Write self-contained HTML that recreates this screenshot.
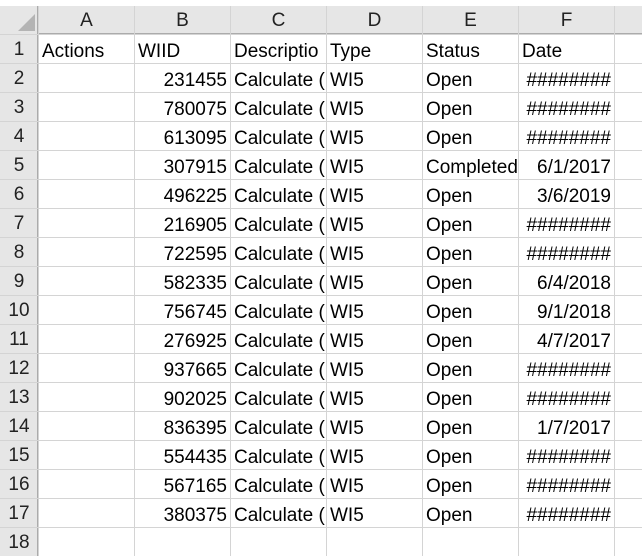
<!DOCTYPE html>
<html><head><style>
body{margin:0;width:642px;height:548px;overflow:hidden;background:#fff;font-family:"Liberation Sans",sans-serif;}
.g{position:absolute;left:0;top:6px;display:grid;grid-template-columns:38px repeat(6,95px) 40px;grid-auto-rows:28px;gap:1px;background:#d4d4d4;}
.g div{background:#fff;font-size:19px;line-height:33px;white-space:nowrap;overflow:hidden;padding:0 3px;color:#000;}
.g .h{background:#e6e6e6;text-align:center;color:#222;line-height:30px;padding:0;}
.g .hb{box-shadow:inset 0 -1px 0 #ababab;}
.g .rb{box-shadow:inset -1px 0 0 #ababab;}
.g .n{text-align:right;}
.g .c{padding-right:0;}
</style></head><body>
<div class="g">
<div class="h hb rb" style="position:relative"><span style="position:absolute;right:3px;bottom:3px;width:0;height:0;border-left:17px solid transparent;border-bottom:17px solid #b4b4b4"></span></div><div class="h hb">A</div><div class="h hb">B</div><div class="h hb">C</div><div class="h hb">D</div><div class="h hb">E</div><div class="h hb">F</div><div class="h hb"></div>
<div class="h rb">1</div><div>Actions</div><div>WIID</div><div class="c">Descriptio</div><div>Type</div><div>Status</div><div>Date</div><div></div>
<div class="h rb">2</div><div></div><div class="n">231455</div><div class="c">Calculate (</div><div>WI5</div><div>Open</div><div class="n">########</div><div></div>
<div class="h rb">3</div><div></div><div class="n">780075</div><div class="c">Calculate (</div><div>WI5</div><div>Open</div><div class="n">########</div><div></div>
<div class="h rb">4</div><div></div><div class="n">613095</div><div class="c">Calculate (</div><div>WI5</div><div>Open</div><div class="n">########</div><div></div>
<div class="h rb">5</div><div></div><div class="n">307915</div><div class="c">Calculate (</div><div>WI5</div><div class="c">Completed</div><div class="n">6/1/2017</div><div></div>
<div class="h rb">6</div><div></div><div class="n">496225</div><div class="c">Calculate (</div><div>WI5</div><div>Open</div><div class="n">3/6/2019</div><div></div>
<div class="h rb">7</div><div></div><div class="n">216905</div><div class="c">Calculate (</div><div>WI5</div><div>Open</div><div class="n">########</div><div></div>
<div class="h rb">8</div><div></div><div class="n">722595</div><div class="c">Calculate (</div><div>WI5</div><div>Open</div><div class="n">########</div><div></div>
<div class="h rb">9</div><div></div><div class="n">582335</div><div class="c">Calculate (</div><div>WI5</div><div>Open</div><div class="n">6/4/2018</div><div></div>
<div class="h rb">10</div><div></div><div class="n">756745</div><div class="c">Calculate (</div><div>WI5</div><div>Open</div><div class="n">9/1/2018</div><div></div>
<div class="h rb">11</div><div></div><div class="n">276925</div><div class="c">Calculate (</div><div>WI5</div><div>Open</div><div class="n">4/7/2017</div><div></div>
<div class="h rb">12</div><div></div><div class="n">937665</div><div class="c">Calculate (</div><div>WI5</div><div>Open</div><div class="n">########</div><div></div>
<div class="h rb">13</div><div></div><div class="n">902025</div><div class="c">Calculate (</div><div>WI5</div><div>Open</div><div class="n">########</div><div></div>
<div class="h rb">14</div><div></div><div class="n">836395</div><div class="c">Calculate (</div><div>WI5</div><div>Open</div><div class="n">1/7/2017</div><div></div>
<div class="h rb">15</div><div></div><div class="n">554435</div><div class="c">Calculate (</div><div>WI5</div><div>Open</div><div class="n">########</div><div></div>
<div class="h rb">16</div><div></div><div class="n">567165</div><div class="c">Calculate (</div><div>WI5</div><div>Open</div><div class="n">########</div><div></div>
<div class="h rb">17</div><div></div><div class="n">380375</div><div class="c">Calculate (</div><div>WI5</div><div>Open</div><div class="n">########</div><div></div>
<div class="h rb">18</div><div></div><div></div><div></div><div></div><div></div><div></div><div></div>
</div>
</body></html>
